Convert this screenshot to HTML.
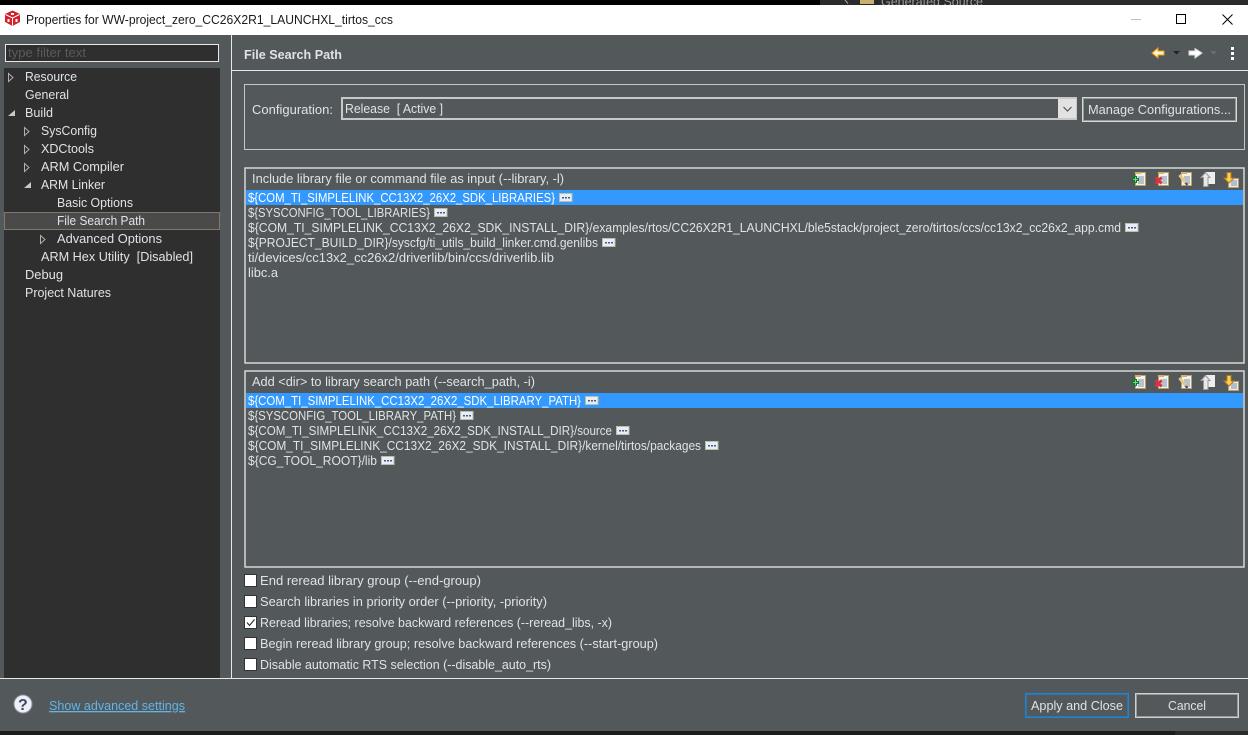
<!DOCTYPE html>
<html><head><meta charset="utf-8"><title>Properties</title>
<style>
html,body{margin:0;padding:0;background:#000;width:1248px;height:735px;overflow:hidden}
svg{display:block}
text{font-family:"Liberation Sans",sans-serif;font-size:13px;fill:#e0e3e5;white-space:pre}
.w{fill:#fff}
</style></head><body>
<svg width="1248" height="735" viewBox="0 0 1248 735" xmlns="http://www.w3.org/2000/svg">
<defs>
<g id="doc"><rect x="4.500" y="1.500" width="10" height="13" fill="#f2f2f2" stroke="#b8a060"/><rect x="4" y="1" width="6" height="2" fill="#d8b060"/><path d="M7 6h6M7 8h6M7 10h6M7 12h6" stroke="#8090a8"/></g>
<g id="i1"><use href="#doc"/><path d="M1 8.500h7M4.500 5v7" stroke="#0a7a30" stroke-width="3"/><path d="M2 8.500h5M4.500 6v5" stroke="#6fdc70" stroke-width="1"/></g>
<g id="i2"><use href="#doc"/><path d="M1.500 6.500l6 6M7.500 6.500l-6 6" stroke="#e03040" stroke-width="3"/></g>
<g id="i3"><use href="#doc"/><path d="M2.500 4l6.500 8" stroke="#e8c888" stroke-width="3"/><path d="M8.500 12l2 2" stroke="#405080" stroke-width="2"/></g>
<g id="i4"><rect x="6" y="1" width="9" height="12" fill="#eee"/><path d="M5.500 1.500 L10 6.500 H8 V15.500 H3.500 V6.500 H1 Z" fill="#e8e8e8" stroke="#999"/></g>
<g id="i5"><rect x="5.500" y="6.500" width="10" height="9" fill="#e8eaee" stroke="#b8a060"/><path d="M8 9h6M8 11h6M8 13h6" stroke="#8090a8"/><path d="M4 0.500H8V6H11L6 11L1 6H4Z" fill="#fbd058" stroke="#b87818"/></g>
<g id="el"><rect x="-0.500" y="-0.500" width="12.500" height="8" fill="#e8eef8" stroke="#b8c0a8"/><path d="M2 3h2v1.500H2zM5 3h2v1.500H5zM8 3h2v1.500H8z" fill="#4a5a80"/></g>
<path id="tri" d="M0.500 0.500L5 4.500L0.500 8.500Z" fill="none" stroke="#b0b0b0"/>
<path id="open" d="M0 6L7 6L7 0Z" fill="#c8c8c8"/>
</defs>

<rect width="1248" height="735" fill="#000"/>
<rect x="820" y="0" width="428" height="5" fill="#2b2b2b"/>
<rect x="860" y="0" width="14" height="4" fill="#c8b070"/>
<path d="M845 0l3 3.500" stroke="#aaa" fill="none"/>
<text x="881" y="6" textLength="102" lengthAdjust="spacingAndGlyphs" style="fill:#9a9a9a">Generated Source</text>

<!-- title bar -->
<rect y="5" width="1248" height="30" fill="#fff"/>
<path d="M12.500 10.500L20 14V22L12.500 26L5 22V14Z" fill="#d2202c"/>
<path d="M5.500 14.500L12.500 18L19.500 14.500M12.500 18V25.500" stroke="#fff" fill="none"/>
<rect x="11" y="13" width="3" height="2" fill="#fff"/><rect x="7.500" y="19" width="2" height="3" fill="#fff"/><rect x="15.500" y="19" width="2" height="3" fill="#fff"/>
<text x="26" y="24" style="fill:#1a1a1a" textLength="367" lengthAdjust="spacingAndGlyphs">Properties for WW-project_zero_CC26X2R1_LAUNCHXL_tirtos_ccs</text>
<rect x="1131" y="19" width="10" height="1" fill="#c0c0c0"/>
<rect x="1176.500" y="14.500" width="9" height="9" fill="none" stroke="#000"/>
<path d="M1222.500 14.500l10 10M1232.500 14.500l-10 10" stroke="#000" fill="none"/>

<!-- main window -->
<rect y="35" width="1248" height="696" fill="#53585b"/>
<rect x="0" y="731" width="1248" height="4" fill="#1c1c1c"/>
<rect x="1175" y="731" width="73" height="4" fill="#2b2b2b"/>
<rect x="4" y="68" width="216" height="610" fill="#2f2f2f"/>
<rect x="5.500" y="44.500" width="213" height="17" fill="#2f2f2f" stroke="#e8e8e8"/>
<text x="8" y="57" textLength="78" lengthAdjust="spacingAndGlyphs" style="fill:#5a5a5a">type filter text</text>

<rect x="231" y="35" width="1" height="643" fill="#e8e8e8"/>
<rect x="232" y="70" width="1016" height="1" fill="#e8e8e8"/>
<rect y="678" width="1248" height="1" fill="#e8e8e8"/>

<!-- tree -->
<use href="#tri" x="8" y="73"/>
<use href="#open" x="8" y="110"/>
<use href="#tri" x="24" y="127"/>
<use href="#tri" x="24" y="145"/>
<use href="#tri" x="24" y="163"/>
<use href="#open" x="24" y="182"/>
<use href="#tri" x="40" y="235"/>
<rect x="4.500" y="212.500" width="215" height="17" fill="#4a4a4a" stroke="#7d7a68"/>
<text x="25" y="81" textLength="52" lengthAdjust="spacingAndGlyphs">Resource</text>
<text x="25" y="99" textLength="44" lengthAdjust="spacingAndGlyphs">General</text>
<text x="25" y="117" textLength="28" lengthAdjust="spacingAndGlyphs">Build</text>
<text x="41" y="135" textLength="56" lengthAdjust="spacingAndGlyphs">SysConfig</text>
<text x="41" y="153" textLength="53" lengthAdjust="spacingAndGlyphs">XDCtools</text>
<text x="41" y="171" textLength="83" lengthAdjust="spacingAndGlyphs">ARM Compiler</text>
<text x="41" y="189" textLength="64" lengthAdjust="spacingAndGlyphs">ARM Linker</text>
<text x="57" y="207" textLength="76" lengthAdjust="spacingAndGlyphs">Basic Options</text>
<text x="57" y="225" textLength="88" lengthAdjust="spacingAndGlyphs">File Search Path</text>
<text x="57" y="243" textLength="105" lengthAdjust="spacingAndGlyphs">Advanced Options</text>
<text x="41" y="261" textLength="152" lengthAdjust="spacingAndGlyphs">ARM Hex Utility  [Disabled]</text>
<text x="25" y="279" textLength="38" lengthAdjust="spacingAndGlyphs">Debug</text>
<text x="25" y="297" textLength="86" lengthAdjust="spacingAndGlyphs">Project Natures</text>

<!-- header -->
<text x="244" y="59" textLength="98" lengthAdjust="spacingAndGlyphs" style="font-weight:700">File Search Path</text>
<path d="M1152 53L1158 48V51H1164V55H1158V58Z" fill="#fff3c8" stroke="#e89c10"/>
<path d="M1173 51h7l-3.500 3.500z" fill="#222"/>
<path d="M1195 48.500L1202 53L1195 58V55H1189V51H1195Z" fill="#fff" stroke="#d8d8d8"/>
<path d="M1210 51h7l-3.500 3.500z" fill="#6a6f72"/>
<rect x="1231" y="47" width="3" height="3" fill="#fff"/><rect x="1231" y="52" width="3" height="3" fill="#fff"/><rect x="1231" y="57" width="3" height="3" fill="#fff"/>

<!-- config -->
<rect x="244.500" y="84.500" width="1000" height="65" fill="none" stroke="#c4c8c8"/>
<text x="252" y="114" textLength="81" lengthAdjust="spacingAndGlyphs">Configuration:</text>
<rect x="342" y="98" width="734" height="21" fill="#53585b" stroke="#c8c8c8" stroke-width="2"/>
<rect x="1058" y="99" width="18" height="19" fill="#e2e2e2"/>
<path d="M1063.500 107l4 4 4-4" fill="none" stroke="#555" stroke-width="1.200"/>
<text x="345" y="113" textLength="98" lengthAdjust="spacingAndGlyphs">Release  [ Active ]</text>
<rect x="1082.500" y="97.500" width="154" height="24" fill="#53585b" stroke="#d8d8d8"/>
<rect x="1083.500" y="98.500" width="152" height="22" fill="none" stroke="#999"/>
<text x="1088" y="114" textLength="143" lengthAdjust="spacingAndGlyphs">Manage Configurations...</text>

<!-- group 1 -->
<rect x="245" y="168" width="999" height="195" fill="none" stroke="#d8d8d8" stroke-width="1.500"/>
<text x="252" y="183" textLength="312" lengthAdjust="spacingAndGlyphs">Include library file or command file as input (--library, -l)</text>
<use href="#i1" x="1131" y="171"/><use href="#i2" x="1154" y="171"/><use href="#i3" x="1177" y="171"/><use href="#i4" x="1200" y="171"/><use href="#i5" x="1223" y="172"/>
<rect x="246" y="190" width="997" height="15" fill="#3399ff"/>
<text x="248" y="202" class="w" textLength="307" lengthAdjust="spacingAndGlyphs">${COM_TI_SIMPLELINK_CC13X2_26X2_SDK_LIBRARIES}</text><use href="#el" x="560" y="194"/>
<text x="248" y="217" textLength="182" lengthAdjust="spacingAndGlyphs">${SYSCONFIG_TOOL_LIBRARIES}</text><use href="#el" x="435" y="209"/>
<text x="248" y="232" textLength="873" lengthAdjust="spacingAndGlyphs">${COM_TI_SIMPLELINK_CC13X2_26X2_SDK_INSTALL_DIR}/examples/rtos/CC26X2R1_LAUNCHXL/ble5stack/project_zero/tirtos/ccs/cc13x2_cc26x2_app.cmd</text><use href="#el" x="1126" y="224"/>
<text x="248" y="247" textLength="350" lengthAdjust="spacingAndGlyphs">${PROJECT_BUILD_DIR}/syscfg/ti_utils_build_linker.cmd.genlibs</text><use href="#el" x="603" y="239"/>
<text x="248" y="262" textLength="306" lengthAdjust="spacingAndGlyphs">ti/devices/cc13x2_cc26x2/driverlib/bin/ccs/driverlib.lib</text>
<text x="248" y="277" textLength="30" lengthAdjust="spacingAndGlyphs">libc.a</text>

<!-- group 2 -->
<rect x="245" y="371" width="999" height="196" fill="none" stroke="#d8d8d8" stroke-width="1.500"/>
<text x="252" y="386" textLength="283" lengthAdjust="spacingAndGlyphs">Add &lt;dir&gt; to library search path (--search_path, -i)</text>
<use href="#i1" x="1131" y="374"/><use href="#i2" x="1154" y="374"/><use href="#i3" x="1177" y="374"/><use href="#i4" x="1200" y="374"/><use href="#i5" x="1223" y="375"/>
<rect x="246" y="393" width="997" height="15" fill="#3399ff"/>
<text x="248" y="405" class="w" textLength="333" lengthAdjust="spacingAndGlyphs">${COM_TI_SIMPLELINK_CC13X2_26X2_SDK_LIBRARY_PATH}</text><use href="#el" x="586" y="397"/>
<text x="248" y="420" textLength="208" lengthAdjust="spacingAndGlyphs">${SYSCONFIG_TOOL_LIBRARY_PATH}</text><use href="#el" x="461" y="412"/>
<text x="248" y="435" textLength="364" lengthAdjust="spacingAndGlyphs">${COM_TI_SIMPLELINK_CC13X2_26X2_SDK_INSTALL_DIR}/source</text><use href="#el" x="617" y="427"/>
<text x="248" y="450" textLength="453" lengthAdjust="spacingAndGlyphs">${COM_TI_SIMPLELINK_CC13X2_26X2_SDK_INSTALL_DIR}/kernel/tirtos/packages</text><use href="#el" x="706" y="442"/>
<text x="248" y="465" textLength="129" lengthAdjust="spacingAndGlyphs">${CG_TOOL_ROOT}/lib</text><use href="#el" x="382" y="457"/>

<!-- checkboxes -->
<rect x="244.500" y="574.500" width="12" height="12" fill="#fff" stroke="#333"/>
<rect x="244.500" y="595.500" width="12" height="12" fill="#fff" stroke="#333"/>
<rect x="244.500" y="616.500" width="12" height="12" fill="#fff" stroke="#333"/>
<path d="M247 622.500l2.500 3 5-6" fill="none" stroke="#333" stroke-width="1.200"/>
<rect x="244.500" y="637.500" width="12" height="12" fill="#fff" stroke="#333"/>
<rect x="244.500" y="658.500" width="12" height="12" fill="#fff" stroke="#333"/>
<text x="260" y="585" textLength="221" lengthAdjust="spacingAndGlyphs">End reread library group (--end-group)</text>
<text x="260" y="606" textLength="287" lengthAdjust="spacingAndGlyphs">Search libraries in priority order (--priority, -priority)</text>
<text x="260" y="627" textLength="352" lengthAdjust="spacingAndGlyphs">Reread libraries; resolve backward references (--reread_libs, -x)</text>
<text x="260" y="648" textLength="398" lengthAdjust="spacingAndGlyphs">Begin reread library group; resolve backward references (--start-group)</text>
<text x="260" y="669" textLength="291" lengthAdjust="spacingAndGlyphs">Disable automatic RTS selection (--disable_auto_rts)</text>

<!-- footer -->
<circle cx="23" cy="704" r="9" fill="#eef0f6" stroke="#8890a8"/>
<text x="18" y="710" style="fill:#404868;font-weight:700;font-size:16px">?</text>
<text x="49" y="710" textLength="136" lengthAdjust="spacingAndGlyphs" style="fill:#62b4e8" text-decoration="underline">Show advanced settings</text>
<rect x="1025.500" y="693.500" width="103" height="24" fill="#53585b" stroke="#1a86d8" stroke-width="1"/>
<rect x="1026.500" y="694.500" width="101" height="22" fill="none" stroke="#1a86d8" stroke-opacity="0.600"/>
<text x="1031" y="710" textLength="92" lengthAdjust="spacingAndGlyphs">Apply and Close</text>
<rect x="1135.500" y="693.500" width="103" height="24" fill="#53585b" stroke="#d0d0d0"/>
<rect x="1136.500" y="694.500" width="101" height="22" fill="none" stroke="#999"/>
<text x="1168" y="710" textLength="38" lengthAdjust="spacingAndGlyphs">Cancel</text>
</svg>
</body></html>
